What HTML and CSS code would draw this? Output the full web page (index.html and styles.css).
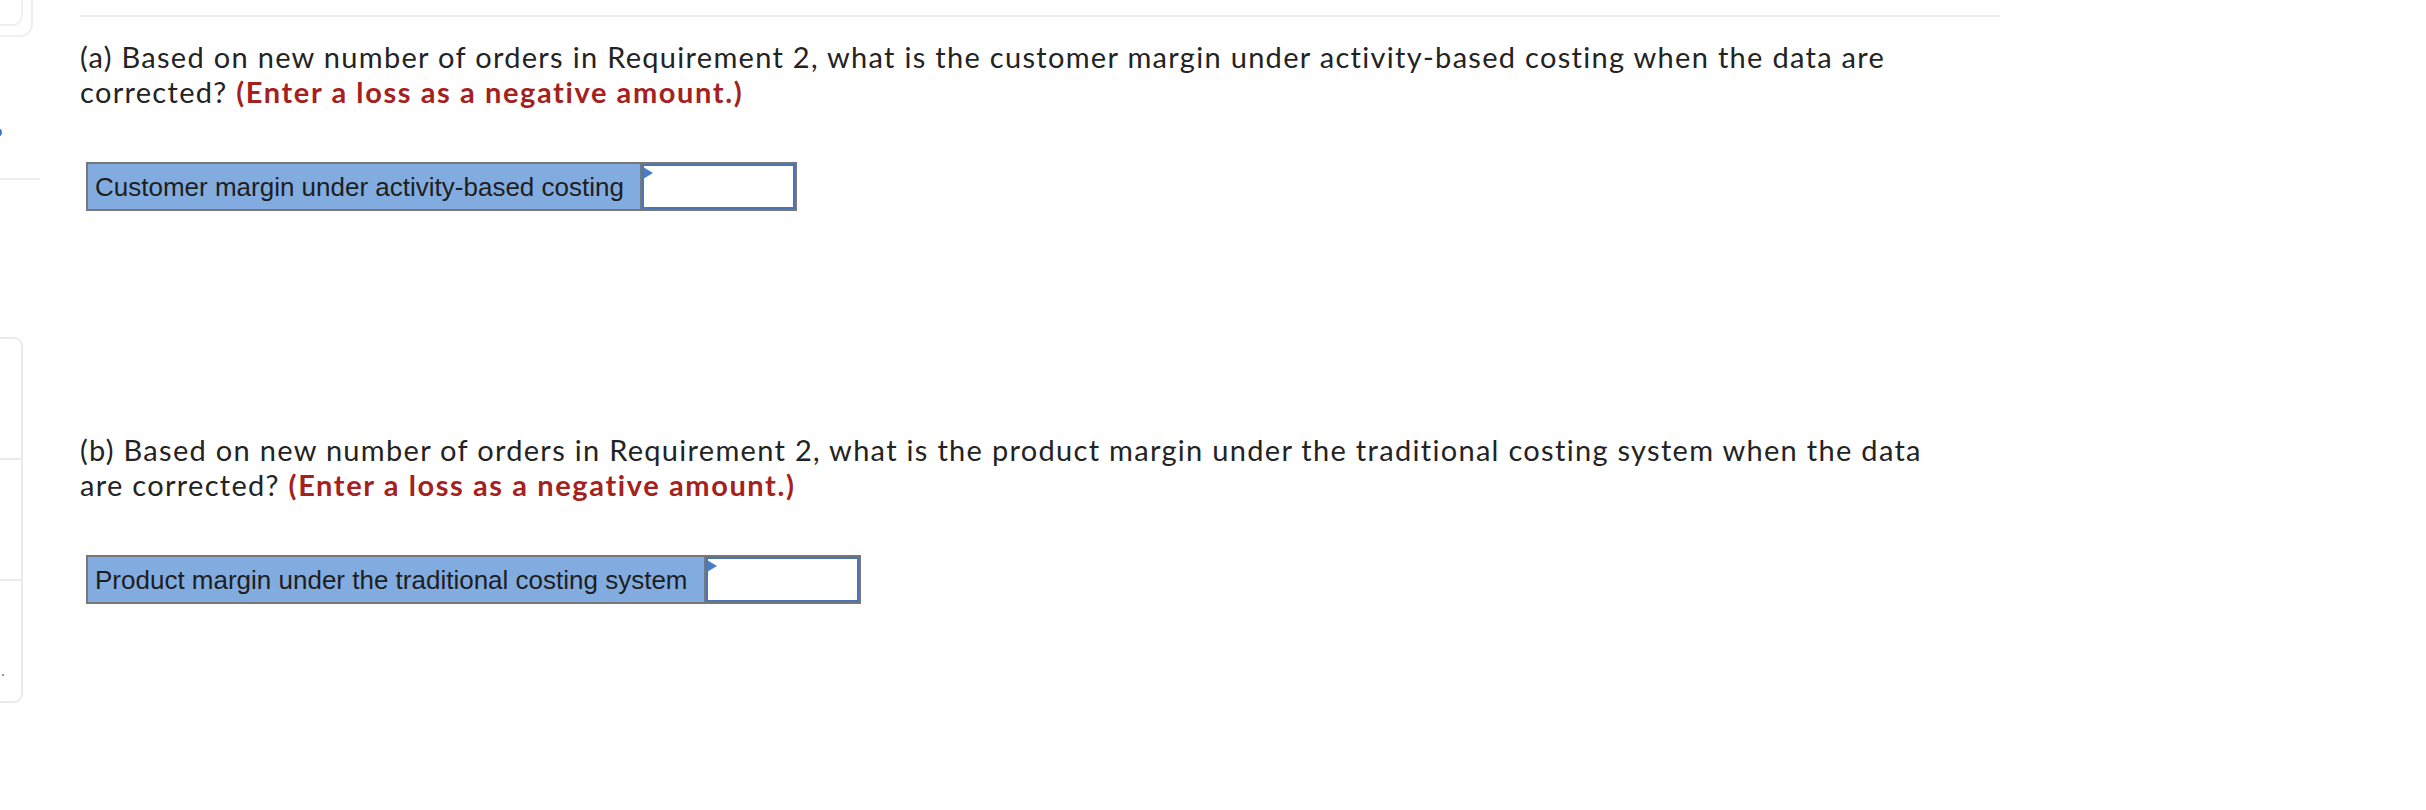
FILE: index.html
```html
<!DOCTYPE html>
<html lang="en">
<head>
<meta charset="utf-8">
<title>Requirement 2</title>
<link rel="stylesheet" href="styles.css">
</head>
<body>
<div class="page">
  <aside class="rail">
    <div class="card-top"><div class="card-top-inner"></div></div>
    <div class="rail-dot"></div>
    <div class="rail-line"></div>
    <div class="card-list">
      <div class="card-row"></div>
      <div class="card-row"></div>
      <div class="card-row last"><span class="tick"></span></div>
    </div>
  </aside>
  <main class="main">
    <div class="rule"></div>
    <section class="part">
      <p class="question">(a) Based on new number of orders in Requirement 2, what is the customer margin under activity-based costing when the data are corrected? <strong class="hint">(Enter a loss as a negative amount.)</strong></p>
      <div class="answer">
        <div class="answer-label">Customer margin under activity-based costing</div>
        <div class="answer-cell"><input class="answer-input" type="text" aria-label="Customer margin under activity-based costing"><span class="flag"></span></div>
      </div>
    </section>
    <section class="part part-b">
      <p class="question">(b) Based on new number of orders in Requirement 2, what is the product margin under the traditional costing system when the data are corrected? <strong class="hint">(Enter a loss as a negative amount.)</strong></p>
      <div class="answer">
        <div class="answer-label">Product margin under the traditional costing system</div>
        <div class="answer-cell"><input class="answer-input" type="text" aria-label="Product margin under the traditional costing system"><span class="flag"></span></div>
      </div>
    </section>
  </main>
</div>
</body>
</html>
```

FILE: styles.css
```css
* { box-sizing: border-box; }

html, body {
  margin: 0;
  padding: 0;
  background: #ffffff;
}

body {
  width: 2426px;
  height: 810px;
  overflow: hidden;
  font-family: "Lato", "Liberation Sans", sans-serif;
  color: #222222;
}

.page {
  display: flex;
  align-items: flex-start;
}

/* left rail (mostly cut off) */
.rail {
  width: 80px;
  flex-shrink: 0;
  display: flex;
  flex-direction: column;
  align-items: flex-start;
}

.card-top {
  width: 100px;
  height: 60px;
  margin-left: -67px;
  margin-top: -23px;
  border: 2px solid #efefef;
  border-radius: 13px;
  padding: 0 8px 9px 0;
  display: flex;
  justify-content: flex-end;
  align-items: flex-end;
}

.card-top-inner {
  width: 60px;
  height: 40px;
  border: 2px solid #efefef;
  border-radius: 10px;
}

.rail-dot {
  width: 9px;
  height: 9px;
  margin-left: -7px;
  margin-top: 91px;
  border-radius: 50%;
  background: #3c74c6;
}

.rail-line {
  width: 40px;
  height: 2px;
  margin-top: 41px;
  background: #ececec;
}

.card-list {
  width: 60px;
  height: 366px;
  margin-left: -37px;
  margin-top: 157px;
  border: 2px solid #ebebeb;
  border-radius: 9px;
  display: flex;
  flex-direction: column;
}

.card-row {
  flex: 0 0 121px;
  border-bottom: 2px solid #ebebeb;
}

.card-row.last {
  flex: 1;
  border-bottom: 0;
  position: relative;
}

.tick {
  position: absolute;
  left: 37px;
  top: 93px;
  width: 2px;
  height: 2px;
  background: #9a9a9a;
}

/* main column */
.main {
  width: 1920px;
  flex-shrink: 0;
}

.rule {
  height: 2px;
  margin-top: 15px;
  background: #eeeeee;
}

.part {
  padding-top: 22px;
}

.part-b {
  padding-top: 221px;
}

.question {
  margin: 0;
  width: 1890px;
  font-size: 29px;
  line-height: 35px;
  color: #232323;
  letter-spacing: 1.3px;
}

.hint {
  color: #a5211d;
  font-weight: 700;
  letter-spacing: 1.6px;
}

.answer {
  display: inline-flex;
  margin-top: 53px;
  margin-left: 6px;
  border: 2px solid #777777;
  background: #ffffff;
}

.answer-label {
  background: #82acdf;
  font-family: "Liberation Sans", Arial, sans-serif;
  font-size: 26px;
  line-height: 45px;
  padding: 1px 16px 0 7px;
  height: 45px;
  color: #1e1e1e;
  letter-spacing: 0;
  white-space: nowrap;
}

.answer-cell {
  position: relative;
  border-left: 2px solid #777777;
  display: flex;
}

.answer-input {
  width: 153px;
  height: 45px;
  margin: 0;
  padding: 0 6px;
  border: 2px solid #4a74b4;
  background: #ffffff;
  font-family: "Liberation Sans", Arial, sans-serif;
  font-size: 24px;
  outline: none;
}

.flag {
  position: absolute;
  left: 1px;
  top: 3px;
  width: 0;
  height: 0;
  border-top: 6px solid transparent;
  border-bottom: 6px solid transparent;
  border-left: 10px solid #4a7cc8;
}
```
